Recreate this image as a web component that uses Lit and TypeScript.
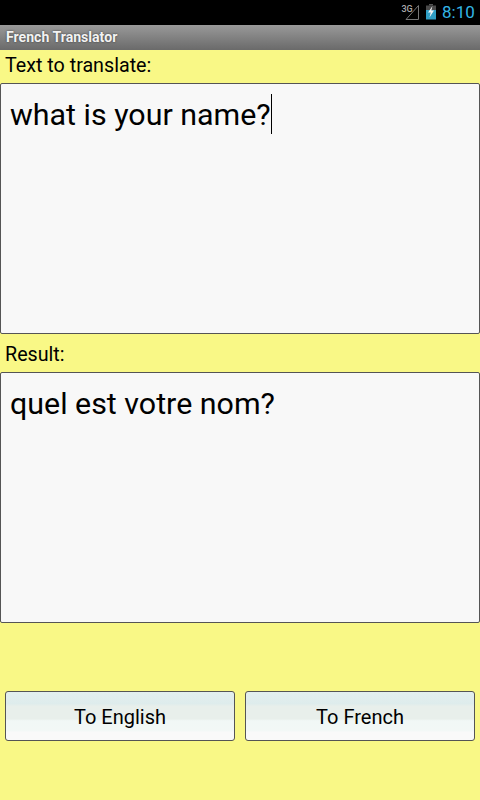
import { LitElement, html, css } from "lit";
import { customElement } from "lit/decorators.js";

@customElement("app-root")
export class AppRoot extends LitElement {
  static styles = css`
    :host {
      display: flex;
      flex-direction: column;
      width: 480px;
      height: 800px;
      background: #f9f886;
      font-family: Roboto, "Liberation Sans", sans-serif;
      color: #000;
      overflow: hidden;
    }
    .status {
      height: 25px;
      background: #000;
      display: flex;
      align-items: center;
      justify-content: flex-end;
      flex: none;
    }
    .signal { width: 18px; height: 25px; margin-right: 7px; }
    .battery { width: 10px; height: 25px; margin-right: 6px; }
    .clock {
      color: #33b5e5;
      font-size: 17px;
      font-weight: 400;
      line-height: 25px;
      width: 33px;
      margin-right: 5px;
      white-space: nowrap;
    }
    .title {
      height: 25px;
      flex: none;
      box-sizing: border-box;
      padding-left: 6px;
      background: linear-gradient(#999, #6a6a6a);
      color: #f2f2f2;
      font-size: 14.1px;
      font-weight: 700;
      line-height: 25px;
      text-shadow: 0 0 2px #333;
    }
    .label {
      height: 33px;
      flex: none;
      box-sizing: border-box;
      padding-left: 5px;
      font-size: 19.7px;
      line-height: 31px;
    }
    .box {
      height: 251px;
      flex: none;
      box-sizing: border-box;
      background: #f8f8f8;
      border: 1px solid #555;
      border-radius: 2px;
      padding: 9px 9px;
      font-size: 30.4px;
      line-height: 44px;
      white-space: nowrap;
    }
    .caret {
      display: inline-block;
      width: 1px;
      height: 40px;
      margin-top: -6px;
      background: #000;
      vertical-align: -9px;
    }
    .gap { height: 5px; flex: none; }
    .actions {
      display: flex;
      gap: 10px;
      padding: 0 5px;
      margin-top: 68px;
    }
    .btn {
      flex: 1;
      height: 50px;
      box-sizing: border-box;
      border: 1px solid #555;
      border-radius: 3px;
      background: linear-gradient(
        #e3efef 0,
        #deecec 24%,
        #e8efeb 30%,
        #e8efeb 56%,
        #f1f8f6 60%,
        #f2f8f6 80%,
        #f9f9f9 84%,
        #f9f9f9 100%
      );
      font-size: 20px;
      line-height: 50px;
      text-align: center;
      color: #000;
    }
  `;

  render() {
    return html`
      <div class="status">
        <svg class="signal" viewBox="0 0 18 25">
          <path d="M5 19.5 L17.5 5.5 V19.5 Z" fill="none" stroke="#777" stroke-width="1"/>
          <text x="0.5" y="11.5" font-size="9" font-weight="500" fill="#aaa" font-family="Roboto, sans-serif">3G</text>
        </svg>
        <svg class="battery" viewBox="0 0 10 25">
          <path d="M3 4 H7 V5.5 H3 Z" fill="#555"/>
          <path d="M0 5.5 H10 V10 H0 Z" fill="#4a4a4a"/>
          <path d="M0 10 H10 V19.5 H0 Z" fill="#2f9ec4"/>
          <path d="M6.5 6 L2 12.5 H4.7 L3.5 17.5 L8 10.5 H5.3 Z" fill="#f4f4f4"/>
        </svg>
        <span class="clock">8:10</span>
      </div>
      <div class="title">French Translator</div>
      <div class="label">Text to translate:</div>
      <div class="box">what is your name?<span class="caret"></span></div>
      <div class="gap"></div>
      <div class="label">Result:</div>
      <div class="box">quel est votre nom?</div>
      <div class="actions">
        <div class="btn">To English</div>
        <div class="btn">To French</div>
      </div>
    `;
  }
}
